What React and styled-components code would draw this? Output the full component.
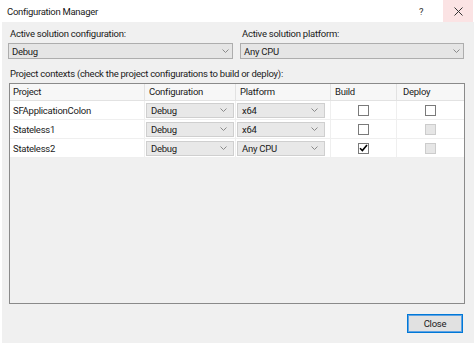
import React from "react";
import styled, { createGlobalStyle } from "styled-components";

const GlobalStyle = createGlobalStyle`
  html, body { margin: 0; padding: 0; background: #ffffff; }
  body {
    font-family: Roboto, "Noto Sans", "Liberation Sans", sans-serif;
    font-size: 9.5px;
    letter-spacing: -0.25px;
    color: #1a1a1a;
  }
  #root { width: 474px; height: 346px; }
  * { box-sizing: border-box; }
`;

const Window = styled.div`
  width: 474px;
  height: 346px;
  display: flex;
  flex-direction: column;
  overflow: hidden;
  background: #ffffff;
`;

const TitleBar = styled.div`
  height: 22px;
  display: flex;
  align-items: stretch;
  background: #ffffff;
`;

const Title = styled.div`
  flex: 1;
  display: flex;
  align-items: center;
  padding-left: 7px;
  font-size: 9.5px;
  letter-spacing: -0.3px;
  color: #1a1a1a;
`;

const CaptionButton = styled.div`
  width: 30px;
  display: flex;
  align-items: center;
  justify-content: center;
  color: #333333;
  background: ${(p) => (p.$close ? "#fbe3e4" : "transparent")};
  margin-left: ${(p) => (p.$close ? "7px" : "0")};
  margin-right: ${(p) => (p.$close ? "1px" : "0")};
`;

const Client = styled.div`
  flex: 1;
  margin-left: 2px;
  background: #f0f0f0;
  padding: 6px 10px 10px 6px;
  display: flex;
  flex-direction: column;
`;

const TopGrid = styled.div`
  display: grid;
  grid-template-columns: 225px 224px;
  column-gap: 7px;
`;

const Field = styled.div`
  display: flex;
  flex-direction: column;
  gap: 3px;
`;

const Label = styled.div`
  line-height: 12px;
  padding-left: 2px;
  margin-top: ${(p) => p.$mt || 0}px;
`;

const Select = styled.div`
  height: ${(p) => (p.$small ? 15 : 16)}px;
  width: ${(p) => (p.$small ? "88px" : "auto")};
  margin-left: ${(p) => (p.$small ? "1px" : "0")};
  border: 1px solid ${(p) => (p.$small ? "#cfcfcf" : "#adadad")};
  background: ${(p) => (p.$small ? "#e8e8e8" : "#e5e5e5")};
  display: flex;
  align-items: center;
  justify-content: space-between;
  padding: ${(p) => (p.$small ? "0 6px 0 4px" : "0 3px 0 3px")};
`;

const Table = styled.div`
  flex: 1;
  margin: 3px -1px 0 1px;
  border: 1px solid #8a8a8a;
  background: #f0f0f0;
  display: flex;
  flex-direction: column;
`;

const COLS = "135px 91px 95px 66px 1fr";

const HeaderRow = styled.div`
  display: grid;
  grid-template-columns: ${COLS};
  height: 17px;
  background: #f7f7f7;
  border-bottom: 1px solid #e2e2e2;
`;

const HeaderCell = styled.div`
  line-height: 16px;
  padding-left: ${(p) => p.$pl || 4}px;
  border-right: ${(p) => (p.$last ? "none" : "1px solid #e2e2e2")};
`;

const Row = styled.div`
  display: grid;
  grid-template-columns: ${COLS};
  height: 19px;
  background: #ffffff;
  border-bottom: 1px solid #efefef;
`;

const Cell = styled.div`
  display: flex;
  align-items: center;
  justify-content: ${(p) => (p.$center ? "center" : "flex-start")};
  padding-left: ${(p) => p.$pl || 0}px;
  border-right: ${(p) => (p.$last ? "none" : "1px solid #efefef")};
`;

const Box = styled.div`
  width: 11px;
  height: 11px;
  border: 1px solid ${(p) => (p.$disabled ? "#cccccc" : "#7a7a7a")};
  background: ${(p) => (p.$disabled ? "#e6e6e6" : "#ffffff")};
  display: flex;
  align-items: center;
  justify-content: center;
`;

const Footer = styled.div`
  margin-top: 10px;
  display: flex;
  justify-content: flex-end;
`;

const Button = styled.div`
  width: 56px;
  height: 19px;
  margin-right: 1px;
  border: 1px solid #0078d7;
  box-shadow: inset 0 0 0 1px #5fa3e3;
  background: #e1e1e1;
  display: flex;
  align-items: center;
  justify-content: center;
`;

const BottomEdge = styled.div`
  height: 3px;
  background: #ffffff;
`;

const Chevron = () => (
  <svg width="7" height="4" viewBox="0 0 7 4">
    <polyline points="0.5,0.5 3.5,3.5 6.5,0.5" fill="none" stroke="#8a8a8a" strokeWidth="1" />
  </svg>
);

const Check = () => (
  <svg width="9" height="8" viewBox="0 0 9 8">
    <path d="M1 4.2 L3.4 6.6 L8 1" fill="none" stroke="#000" strokeWidth="1.6" />
  </svg>
);

const CloseGlyph = () => (
  <svg width="9" height="9" viewBox="0 0 9 9">
    <path d="M0.5 0.5 L8.5 8.5 M8.5 0.5 L0.5 8.5" stroke="#333" strokeWidth="1" />
  </svg>
);

const rows = [
  { name: "SFApplicationColon", config: "Debug", platform: "x64", build: false, deploy: "off" },
  { name: "Stateless1", config: "Debug", platform: "x64", build: false, deploy: "disabled" },
  { name: "Stateless2", config: "Debug", platform: "Any CPU", build: true, deploy: "disabled" },
];

export default function App() {
  return (
    <>
      <GlobalStyle />
      <Window>
        <TitleBar>
          <Title>Configuration Manager</Title>
          <CaptionButton>?</CaptionButton>
          <CaptionButton $close>
            <CloseGlyph />
          </CaptionButton>
        </TitleBar>
        <Client>
          <TopGrid>
            <Field>
              <Label>Active solution configuration:</Label>
              <Select>
                <span>Debug</span>
                <Chevron />
              </Select>
            </Field>
            <Field>
              <Label>Active solution platform:</Label>
              <Select>
                <span>Any CPU</span>
                <Chevron />
              </Select>
            </Field>
          </TopGrid>
          <Label $mt={9}>Project contexts (check the project configurations to build or deploy):</Label>
          <Table>
            <HeaderRow>
              <HeaderCell $pl={3}>Project</HeaderCell>
              <HeaderCell>Configuration</HeaderCell>
              <HeaderCell>Platform</HeaderCell>
              <HeaderCell>Build</HeaderCell>
              <HeaderCell $pl={6} $last>Deploy</HeaderCell>
            </HeaderRow>
            {rows.map((r) => (
              <Row key={r.name}>
                <Cell $pl={3}>{r.name}</Cell>
                <Cell>
                  <Select $small>
                    <span>{r.config}</span>
                    <Chevron />
                  </Select>
                </Cell>
                <Cell>
                  <Select $small>
                    <span>{r.platform}</span>
                    <Chevron />
                  </Select>
                </Cell>
                <Cell $center>
                  <Box>{r.build && <Check />}</Box>
                </Cell>
                <Cell $center $last>
                  <Box $disabled={r.deploy === "disabled"} />
                </Cell>
              </Row>
            ))}
          </Table>
          <Footer>
            <Button>Close</Button>
          </Footer>
        </Client>
        <BottomEdge />
      </Window>
    </>
  );
}
